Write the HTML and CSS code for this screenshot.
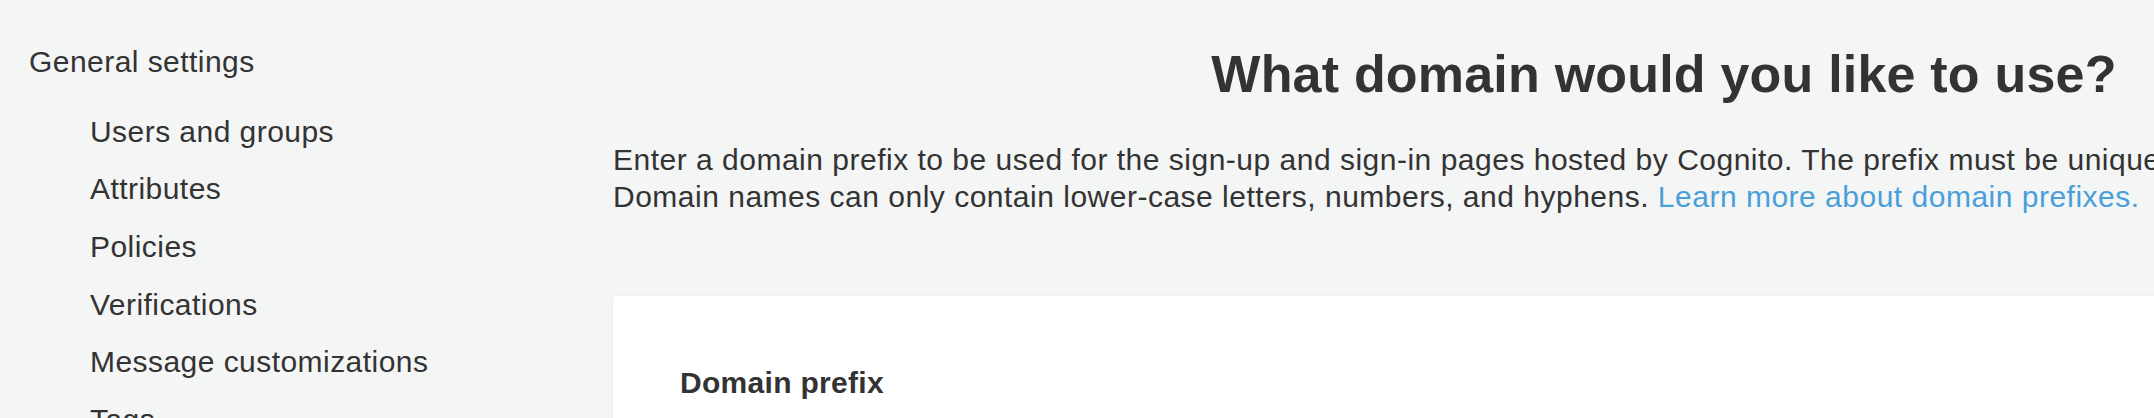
FILE: index.html
```html
<!DOCTYPE html>
<html lang="en">
<head>
<meta charset="utf-8">
<title>Domain name</title>
<link rel="stylesheet" href="styles.css">
</head>
<body>
<div class="page">
  <nav class="sidebar">
    <div class="nav-group">General settings</div>
    <ul class="nav-list">
      <li>Users and groups</li>
      <li>Attributes</li>
      <li>Policies</li>
      <li>Verifications</li>
      <li>Message customizations</li>
      <li>Tags</li>
    </ul>
  </nav>
  <main class="main">
    <h1 class="title">What domain would you like to use?</h1>
    <p class="intro">Enter a domain prefix to be used for the sign-up and sign-in pages hosted by Cognito. The prefix must be unique across the selected AWS Region.<br>Domain names can only contain lower-case letters, numbers, and hyphens. <a class="link" href="#">Learn more about domain prefixes.</a></p>
    <section class="card">
      <h2 class="card-title">Domain prefix</h2>
    </section>
  </main>
</div>
</body>
</html>
```
FILE: styles.css
```css
html, body {
  margin: 0;
  padding: 0;
}
body {
  background: #f4f5f5;
  color: #333333;
  font-family: "Liberation Sans", Arial, Helvetica, sans-serif;
  overflow: hidden;
  width: 2154px;
  height: 418px;
}
.page {
  display: flex;
  align-items: flex-start;
  width: 2800px;
}
.sidebar {
  width: 584px;
  flex: 0 0 584px;
  padding: 41.5px 0 0 29px;
  font-size: 30px;
  letter-spacing: 0.45px;
  color: #333333;
}
.nav-group {
  line-height: 40px;
}
.nav-list {
  list-style: none;
  margin: 21px 0 0 0;
  padding: 0 0 0 61px;
}
.nav-list li {
  line-height: 57.7px;
}
.main {
  width: 2102px;
  flex: 0 0 2102px;
  padding-top: 44px;
}
.title {
  margin: 0;
  font-size: 52px;
  line-height: 60px;
  font-weight: bold;
  letter-spacing: 0.2px;
  text-align: center;
  color: #333333;
}
.intro {
  margin: 38px 0 0 0;
  font-size: 30px;
  line-height: 36.7px;
  letter-spacing: 0.5px;
  color: #333333;
}
.link {
  color: #4a9fdb;
  text-decoration: none;
}
.card {
  margin: 80.5px 0 0 0;
  background: #ffffff;
  border-radius: 3px;
  box-shadow: 0 0 2px rgba(0, 0, 0, 0.08), 0 1px 2px rgba(0, 0, 0, 0.06);
  padding: 69px 0 60px 67px;
  height: 200px;
}
.card-title {
  margin: 0;
  font-size: 30px;
  line-height: 36px;
  font-weight: bold;
  letter-spacing: 0.3px;
  color: #333333;
}
```
